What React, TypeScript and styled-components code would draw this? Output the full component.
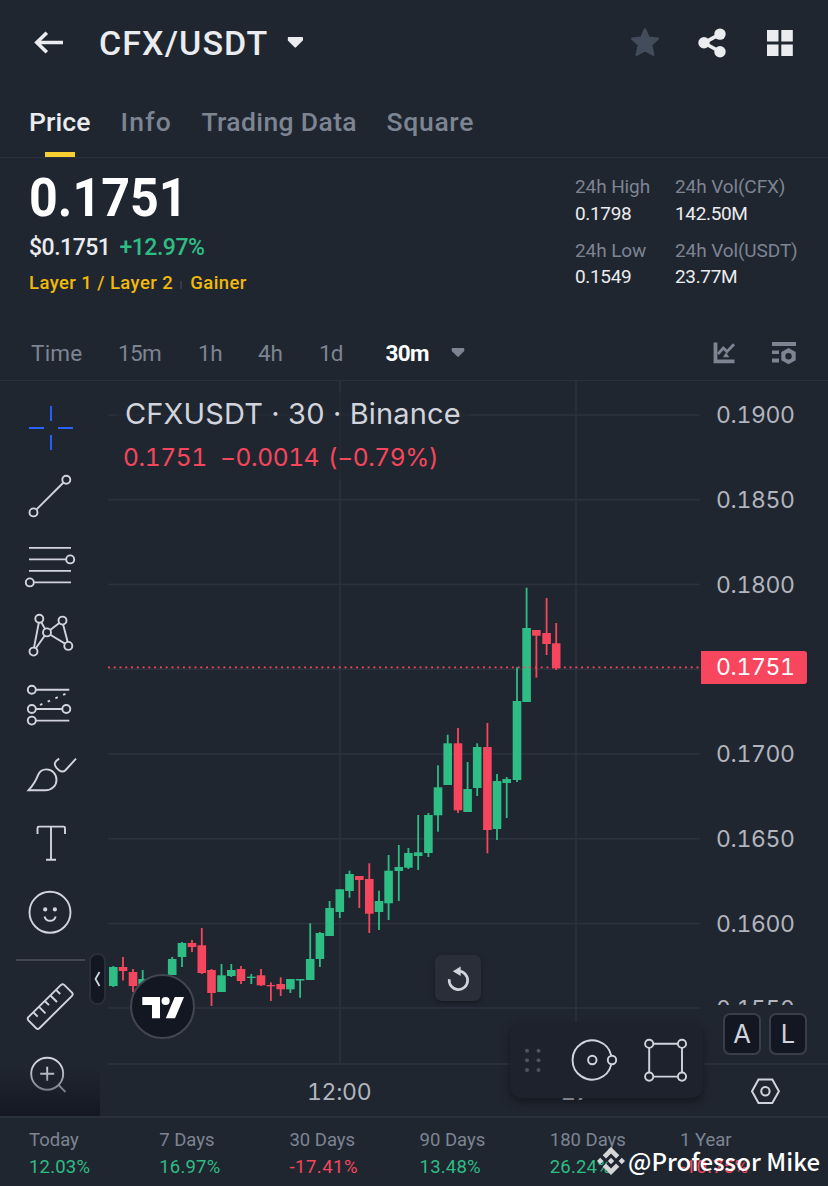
import React from "react";
import styled, { createGlobalStyle } from "styled-components";

const c = {
  bg: "#202630",
  line: "#2b313b",
  text: "#eaecef",
  muted: "#7d8492",
  green: "#2ebd85",
  red: "#f6465d",
  yellow: "#f0b90b",
  ink: "#d1d4dc",
  dark: "#131722",
};

const GlobalStyle = createGlobalStyle`
  * { box-sizing: border-box; }
  body { margin: 0; background: ${c.bg}; }
`;

const Page = styled.div`
  position: relative;
  width: 828px;
  height: 1186px;
  overflow: hidden;
  display: flex;
  flex-direction: column;
  background: ${c.bg};
  color: ${c.text};
  font-family: Roboto, sans-serif;
  white-space: nowrap;
`;

/* ---------- header ---------- */

const Header = styled.header`
  height: 86px;
  display: flex;
  align-items: center;
  padding: 0 34px 1px 33px;
`;

const Title = styled.h1`
  margin: 1px 19px 0 35px;
  font-size: 34px;
  font-weight: 500;
  line-height: 40px;
  letter-spacing: 1.1px;
`;

const HeaderActions = styled.div`
  margin-left: auto;
  display: flex;
  align-items: center;
`;

const StarIcon = styled.svg`
  margin-right: 38px;
`;

const ShareIcon = styled.svg`
  margin-right: 39px;
`;

const Tabs = styled.nav`
  height: 72px;
  padding: 1px 0 0 29px;
  display: grid;
  grid-template-columns: 91.5px 81px 185px auto;
  border-bottom: 1px solid ${c.line};
`;

const Tab = styled.span<{ $active?: boolean; $track?: number }>`
  position: relative;
  justify-self: start;
  font-size: 26.5px;
  font-weight: 500;
  line-height: 70px;
  letter-spacing: ${(p) => p.$track ?? 0}px;
  color: ${(p) => (p.$active ? c.text : c.muted)};
  &::after {
    content: "";
    display: ${(p) => (p.$active ? "block" : "none")};
    position: absolute;
    left: 16px;
    bottom: 0;
    width: 30px;
    height: 5px;
    background: #f8cf33;
  }
`;

/* ---------- ticker ---------- */

const Ticker = styled.section`
  height: 167px;
  padding: 12px 0 0 29px;
  display: grid;
  grid-template-columns: 546px auto;
`;

const BigPrice = styled.div`
  font-size: 54px;
  font-weight: 700;
  line-height: 56px;
  color: #fff;
  transform: scaleX(0.93);
  transform-origin: left;
`;

const SubPrice = styled.div`
  margin-top: 8px;
  display: flex;
  gap: 9px;
  font-size: 23px;
  font-weight: 500;
  line-height: 28px;
  letter-spacing: -0.48px;
`;

const Change = styled.span`
  color: ${c.green};
`;

const Tags = styled.div`
  margin-top: 9px;
  display: flex;
  align-items: center;
  font-size: 18.5px;
  font-weight: 500;
  line-height: 24px;
  letter-spacing: 0.42px;
  color: ${c.yellow};
`;

const TagDivider = styled.i`
  width: 2px;
  height: 8px;
  margin: 3px 8px 0 7px;
  background: #333b47;
`;

const Stats = styled.dl`
  margin: 5px 0 0;
  display: grid;
  grid-template-columns: 100px auto;
  align-content: start;
  row-gap: 13px;
`;

const Stat = styled.div`
  dt, dd {
    margin: 0;
    font-size: 19px;
    line-height: 24px;
  }
  dt { color: ${c.muted}; letter-spacing: -0.1px; }
  dd { margin-top: 2.5px; letter-spacing: -0.35px; }
`;

/* ---------- intervals ---------- */

const Intervals = styled.nav`
  height: 56px;
  padding-left: 31px;
  display: grid;
  grid-template-columns: 87px 80px 60px 61px 66.5px 65px 262px 59px auto;
  align-items: center;
  border-bottom: 1px solid ${c.line};
`;

const Interval = styled.span<{ $active?: boolean; $track?: number }>`
  font-size: 22.5px;
  line-height: 28px;
  letter-spacing: ${(p) => p.$track ?? 0}px;
  font-weight: ${(p) => (p.$active ? 700 : 400)};
  color: ${(p) => (p.$active ? "#fff" : c.muted)};
`;

/* ---------- chart ---------- */

const Main = styled.main`
  height: 735px;
  display: flex;
`;

const Toolbar = styled.aside`
  position: relative;
  width: 100px;
  padding-top: 12px;
  display: flex;
  flex-direction: column;
`;

const Tool = styled.button`
  height: 69.3px;
  padding: 0;
  border: 0;
  background: none;
  display: block;
`;

const ToolDivider = styled.hr`
  width: 69px;
  height: 2px;
  margin: 12px 0 11px 16px;
  border: 0;
  background: #434651;
`;

const Fade = styled.div`
  position: absolute;
  left: 0;
  right: 0;
  bottom: 0;
  height: 50px;
  background: linear-gradient(to bottom, rgba(19, 23, 34, 0), rgba(19, 23, 34, 0.95));
`;

const Collapse = styled.button`
  position: absolute;
  left: 89px;
  bottom: 111px;
  width: 17px;
  height: 52px;
  padding: 0;
  border: 2px solid #2a2e39;
  border-radius: 8px;
  background: ${c.dark};
  display: grid;
  place-items: center;
  z-index: 1;
`;

const ChartColumn = styled.div`
  position: relative;
  width: 728px;
  display: flex;
  flex-direction: column;
`;

const PlotRow = styled.div`
  height: 682px;
  display: flex;
`;

const Axis = styled.div`
  width: 127px;
  display: flex;
  flex-direction: column;
`;

const AxisScale = styled.div`
  height: 624px;
  overflow: hidden;
  font-family: Inter, sans-serif;
  font-size: 23px;
  font-variant-numeric: tabular-nums;
  letter-spacing: -0.35px;
  color: #b2b5be;
`;

const AxisLabel = styled.div`
  height: 84.8px;
  padding-left: 15px;
  line-height: 84.8px;
  &:first-child { margin-top: -8px; }
`;

const AxisCurrent = styled.div`
  height: 84.8px;
  padding-bottom: 4px;
  display: flex;
  align-items: center;
`;

const PriceTag = styled.span`
  width: 106px;
  padding-left: 15px;
  line-height: 33px;
  border-radius: 0 3px 3px 0;
  background: #f7465d;
  color: #fff;
`;

const ScaleButtons = styled.div`
  margin: 8px 0 0 22px;
  display: flex;
  gap: 8px;
`;

const ScaleButton = styled.button`
  width: 38px;
  height: 42px;
  padding: 0;
  border: 2px solid #3a3e4a;
  border-radius: 7px;
  background: ${c.dark};
  color: ${c.ink};
  font: 400 25.5px/38px Inter, sans-serif;
`;

const TimeAxis = styled.div`
  height: 53px;
  margin-left: 8px;
  border-top: 2px solid ${c.line};
  display: grid;
  grid-template-columns: 462px 142px auto;
  align-items: center;
  font-family: Inter, sans-serif;
  font-size: 23px;
  font-variant-numeric: tabular-nums;
  letter-spacing: -0.3px;
  color: #b2b5be;
`;

const TimeLabels = styled.div`
  display: flex;
  justify-content: space-between;
  padding-left: 199px;
  padding-top: 2px;
  width: 482px;
`;

const BoldLabel = styled.b`
  font-weight: 600;
`;

const Legend = styled.div`
  position: absolute;
  left: 16px;
  top: 12px;
  padding: 0 8px;
  background: rgba(32, 38, 48, 0.65);
  font-family: Inter, sans-serif;
`;

const LegendTitle = styled.div`
  padding-left: 1px;
  font-size: 29px;
  line-height: 42px;
  letter-spacing: 0.14px;
  color: ${c.ink};
`;

const LegendValues = styled.div`
  display: grid;
  grid-template-columns: 97px 108px auto;
  margin-left: -1px;
  font-size: 24.5px;
  line-height: 44px;
  letter-spacing: -0.4px;
  font-variant-numeric: tabular-nums;
  color: ${c.red};
`;

const BrandBadge = styled.div`
  position: absolute;
  left: 30px;
  top: 593px;
  width: 65px;
  height: 65px;
  border: 2px solid #434651;
  border-radius: 50%;
  background: ${c.dark};
`;

const ResetButton = styled.button`
  position: absolute;
  left: 335px;
  top: 574px;
  width: 46px;
  height: 46px;
  padding: 0;
  border: 0;
  border-radius: 7px;
  background: #2a2e39;
  box-shadow: 0 2px 5px rgba(0, 0, 0, 0.35);
`;

const DrawingBar = styled.div`
  position: absolute;
  left: 410px;
  top: 641px;
  width: 193px;
  height: 76px;
  border-radius: 12px;
  background: #1e222d;
  box-shadow: 0 4px 10px rgba(0, 0, 0, 0.4);
`;

/* ---------- performance ---------- */

const Performance = styled.footer`
  height: 70px;
  padding: 9px 0 0 29px;
  display: grid;
  grid-template-columns: repeat(6, 130.2px);
  border-top: 2px solid ${c.line};
`;

const Period = styled.div<{ $down?: boolean }>`
  font-size: 18.5px;
  line-height: 27px;
  color: ${c.muted};
  strong {
    display: block;
    font-weight: 400;
    letter-spacing: ${(p) => (p.$down ? 0.5 : 0.2)}px;
    color: ${(p) => (p.$down ? c.red : c.green)};
  }
`;

const Watermark = styled.div`
  position: absolute;
  left: 597px;
  top: 1145px;
  display: flex;
  align-items: center;
  gap: 3px;
  font: 500 24px/32px "Noto Sans CJK SC", "Noto Sans", sans-serif;
  letter-spacing: 0.05px;
  color: #fff;
`;

type Candle = [x: number, open: number, close: number, high: number, low: number, up: 0 | 1];

/* x centre, body top, body bottom, wick top, wick bottom, rising */
const candles: Candle[] = [
  [113.3, 967, 986, 966, 987, 1], [123, 967, 971, 957, 980.5, 0], [133, 972, 986, 969, 992, 0],
  [142.7, 979, 986, 970, 990, 1], [152.5, 979, 988, 976, 990, 0], [162.3, 976, 988, 974, 990, 1],
  [172.2, 959, 975, 957, 975, 1], [182, 943, 957, 942, 967, 1], [192, 943, 947, 940, 952, 0],
  [201.8, 945.3, 973, 928, 974, 0], [211.5, 970, 993, 969, 1006, 0], [221.5, 975.3, 992, 964, 992, 1],
  [231.3, 970, 976, 964, 977, 1], [241, 969, 981, 966, 984, 0], [251.3, 976.7, 978, 974, 984, 1],
  [261, 975.3, 985.3, 969, 986, 0], [270.9, 985, 986.3, 982.3, 1001, 0], [280.7, 984, 989.3, 977.3, 996, 0],
  [290.4, 979, 989.3, 979, 993, 1], [300.1, 979, 980.5, 979, 997.7, 1], [310.2, 959, 980, 923.3, 980, 1],
  [319.9, 933, 959, 932, 967, 1], [329.6, 908, 936, 901, 936, 1], [339.8, 889.3, 912, 889.3, 918, 1],
  [349.5, 874, 891, 870.7, 897.7, 1], [359.3, 876, 880, 876, 908, 0], [369.3, 879, 913.7, 863.3, 933, 0],
  [379, 901, 912, 890.7, 930, 1], [388.6, 870.7, 903.3, 855, 920, 1], [398.8, 867, 871, 845, 901, 1],
  [408.4, 853, 867.7, 848, 869, 1], [418.2, 852.3, 856, 815, 870, 1], [428.4, 815, 853, 813, 857, 1],
  [438, 787.3, 815.3, 765.3, 831.7, 1], [447.7, 743.3, 785, 734.7, 785, 1], [458, 743.3, 810.3, 728, 813, 0],
  [467.6, 789, 812, 762, 812, 1], [477.2, 747, 788, 743.3, 796, 1], [487.4, 747, 830, 723, 853.3, 0],
  [497, 781, 829, 774, 840, 1], [506.7, 779, 783, 777, 818, 1], [517, 701, 780, 667.3, 782, 1],
  [526.6, 628, 702, 587.7, 702, 1], [536.4, 630, 635.7, 630, 677.7, 0], [546.6, 633, 644, 598, 655, 0],
  [556.2, 643.3, 668.3, 623, 670, 0],
];

const gridRows = [415, 499.7, 584.4, 669.2, 754, 838.8, 923.6, 1008];

const Plot = () => (
  <svg width="601" height="682" viewBox="100 381 601 682">
    <g fill="#2c323d">
      {gridRows.map((y) => (
        <rect key={y} x="108" y={y - 0.8} width="592" height="1.6" />
      ))}
      <rect x="339.2" y="381" width="1.6" height="682" />
      <rect x="575.2" y="381" width="1.6" height="682" />
    </g>
    {candles.map(([x, top, bottom, high, low, up]) => (
      <g key={x} fill={up ? c.green : c.red}>
        <rect x={x - 0.9} y={high} width="1.8" height={low - high} />
        <rect x={x - 4.3} y={top} width="8.6" height={bottom - top} />
      </g>
    ))}
    <path d="M108 667.4H700" stroke={c.red} strokeWidth="1.9" strokeDasharray="1.9 3.87" />
  </svg>
);

const tools: React.ReactNode[] = [
  <g stroke="#2962ff"><path d="M51 13V28M51 42V57M29 35H44M58 35H73" /></g>,
  <><circle cx="66.3" cy="17.7" r="4" /><circle cx="33.5" cy="50.4" r="4" /><path d="M63.5 20.5L36.3 47.6" /></>,
  <><path d="M29 15.9H71M29 27.4H66M29 38.9H71M34 50.4H71" /><circle cx="70.2" cy="27.4" r="4" /><circle cx="29.8" cy="50.4" r="4" /></>,
  <>
    <circle cx="39.3" cy="17.8" r="4" /><circle cx="62.5" cy="19.6" r="4" /><circle cx="47" cy="31.4" r="4" />
    <circle cx="33.5" cy="50.6" r="4" /><circle cx="68.3" cy="44.9" r="4" />
    <path d="M38.8 21.8L34 46.6M41.3 21.3L45 27.9M44.7 34.7L35.8 47.3M50.2 29L59.3 22M50.3 33.7L65 42.6M63.1 23.6L67.7 40.9" />
  </>,
  <>
    <circle cx="31.8" cy="19.8" r="4" /><circle cx="31.8" cy="39" r="4" /><circle cx="66.3" cy="39" r="4" /><circle cx="31.8" cy="50.6" r="4" />
    <path d="M35.8 19.8H69.3M35.8 39H62.3M35.8 50.6H69.3" />
    <path d="M40 35L67 23.2" strokeDasharray="2.6 5.8" />
  </>,
  <>
    <path d="M28.6 51.2H45.5C52 51.2 56.5 46.4 56.5 40.9C56.5 34.9 52 30.4 46.5 30.4C42 30.4 39.5 32.6 38 36.2C36 41.7 33 46.4 28.6 51.2Z" />
    <path d="M59.2 19.6C54.3 22.4 53.5 25.4 56.5 28.9L59 31.2C61.5 33.2 63.5 33.2 65.7 31L76 19.6" />
  </>,
  <path d="M37.5 25V19Q37.5 17.6 39 17.6H63.5Q65 17.6 65 19V25M51 17.6V50.8M46 50.8H56" />,
  <>
    <circle cx="50" cy="34.3" r="20.5" />
    <path d="M44.5 38.4C46 44.2 54 44.2 55.7 38.4" />
    <g stroke="none" fill={c.ink}><circle cx="45.2" cy="31.4" r="2.1" /><circle cx="54.9" cy="31.4" r="2.1" /></g>
  </>,
];

/* the last two tools sit below the divider */
const lowerTools: React.ReactNode[] = [
  <>
    <path d="M61 12.9Q62.6 11.5 64.2 12.9L72 20.7Q73.4 22.3 72 23.9L39.4 56.2Q37.8 57.6 36.2 56.2L28.4 48.4Q27 46.8 28.4 45.2Z" />
    <path d="M33.5 40.5L37.7 44.7M39 34.8L45.5 41.3M44.8 29L49 33.2M50.4 23.5L57 30M56 17.8L60.2 22" />
  </>,
  <><circle cx="47.2" cy="31.7" r="16" /><path d="M47.2 24.7V38.7M40.2 31.7H54.2M58.7 43.2L65.5 50" /></>,
];

const ToolIcon = ({ children }: { children: React.ReactNode }) => (
  <svg width="100" height="69.3" viewBox="0 0 100 69.3" fill="none" stroke={c.ink} strokeWidth="1.9">
    {children}
  </svg>
);

const tabs = [
  { label: "Price", active: true, track: 0.1 },
  { label: "Info", track: 1.2 },
  { label: "Trading Data", track: 0.36 },
  { label: "Square", track: 0.7 },
];

const intervals = [
  { label: "Time", track: 0.2 },
  { label: "15m", track: -0.6 },
  { label: "1h", track: -0.5 },
  { label: "4h", track: -0.1 },
  { label: "1d", track: -0.9 },
  { label: "30m", track: -0.7, active: true },
];

const stats = [
  ["24h High", "0.1798"],
  ["24h Vol(CFX)", "142.50M"],
  ["24h Low", "0.1549"],
  ["24h Vol(USDT)", "23.77M"],
];

const periods = [
  ["Today", "12.03%"],
  ["7 Days", "16.97%"],
  ["30 Days", "-17.41%"],
  ["90 Days", "13.48%"],
  ["180 Days", "26.24%"],
  ["1 Year", "-10.75%"],
];

export default function App() {
  return (
    <Page>
      <GlobalStyle />
      <Header>
        <svg width="31" height="24" viewBox="0 0 31 24" fill="none" stroke={c.text} strokeWidth="3.6">
          <path d="M3.5 11.5H30M13.8 1.7L3.8 11.5L13.8 21.3" />
        </svg>
        <Title>CFX/USDT</Title>
        <svg width="17" height="14" viewBox="0 0 17 14" fill={c.text}>
          <path d="M1.5 1H15Q16 1 16 2V4.3L9 11.3Q8.3 12 7.6 11.3L.8 4.5V2Q.8 1 1.5 1Z" />
        </svg>
        <HeaderActions>
          <StarIcon width="30" height="31" viewBox="0 0 30 31" fill="#434c5a" stroke="#434c5a" strokeWidth="2.4" strokeLinejoin="round">
            <path d="M15 2.4L18.7 10.8L27.9 11.7L21 17.8L23.3 27.8L15 23.3L6.7 27.8L9 17.8L2.1 11.7L11.3 10.8Z" />
          </StarIcon>
          <ShareIcon width="29" height="30" viewBox="0 0 29 30" fill={c.text}>
            <circle cx="6" cy="14.8" r="5.7" /><circle cx="22" cy="6.1" r="5.7" /><circle cx="22" cy="23.8" r="5.7" />
            <path d="M22 6.1L6 14.8L22 23.8" fill="none" stroke={c.text} strokeWidth="3.6" />
          </ShareIcon>
          <svg width="28" height="28" viewBox="0 0 28 28" fill={c.text}>
            <path d="M1 1H12.5V12.5H1ZM15.3 1H26.8V12.5H15.3ZM1 15.4H12.5V27H1ZM15.3 15.4H26.8V27H15.3Z" />
          </svg>
        </HeaderActions>
      </Header>

      <Tabs>
        {tabs.map((t) => (
          <Tab key={t.label} $active={t.active} $track={t.track}>{t.label}</Tab>
        ))}
      </Tabs>

      <Ticker>
        <div>
          <BigPrice>0.1751</BigPrice>
          <SubPrice>
            <span>$0.1751</span>
            <Change>+12.97%</Change>
          </SubPrice>
          <Tags>
            <span>Layer 1 / Layer 2</span>
            <TagDivider />
            <span>Gainer</span>
          </Tags>
        </div>
        <Stats>
          {stats.map(([label, value]) => (
            <Stat key={label}>
              <dt>{label}</dt>
              <dd>{value}</dd>
            </Stat>
          ))}
        </Stats>
      </Ticker>

      <Intervals>
        {intervals.map((t) => (
          <Interval key={t.label} $active={t.active} $track={t.track}>{t.label}</Interval>
        ))}
        <svg width="14" height="12" viewBox="0 0 14 12" fill="#7d8492">
          <path d="M1.5 1H12.5Q13.3 1 13.3 1.8V4L7.7 9.6Q7 10.3 6.3 9.6L.7 4V1.8Q.7 1 1.5 1Z" />
        </svg>
        <svg width="23" height="24" viewBox="0 0 23 24" fill="none" stroke="#7d8492">
          <path d="M2.5 1.5V20.3H21.5" strokeWidth="3.8" />
          <path d="M5 13L10.3 7L14 10.6L21 3.2" strokeWidth="2.8" />
          <path d="M13 11.3L10 16.2H16.3Z" fill="#7d8492" stroke="none" />
        </svg>
        <svg width="25" height="24" viewBox="0 0 25 24" fill="#7d8492">
          <path d="M0 1H24V5H0ZM0 9.5H7V13H0ZM0 17.5H7V21.5H0Z" />
          <path fillRule="evenodd" d="M16.5 7L23.7 11V19.3L16.5 23.3L9.3 19.3V11ZM16.5 12A3.2 3.2 0 1 0 16.5 18.4A3.2 3.2 0 1 0 16.5 12Z" />
        </svg>
      </Intervals>

      <Main>
        <Toolbar>
          {tools.map((icon, i) => (
            <Tool key={i}><ToolIcon>{icon}</ToolIcon></Tool>
          ))}
          <ToolDivider />
          {lowerTools.map((icon, i) => (
            <Tool key={i}><ToolIcon>{icon}</ToolIcon></Tool>
          ))}
          <Fade />
          <Collapse>
            <svg width="7" height="16" viewBox="0 0 7 16" fill="none" stroke={c.ink} strokeWidth="1.8">
              <path d="M5.5 1L1.5 8L5.5 15" />
            </svg>
          </Collapse>
        </Toolbar>

        <ChartColumn>
          <PlotRow>
            <Plot />
            <Axis>
              <AxisScale>
                <AxisLabel>0.1900</AxisLabel>
                <AxisLabel>0.1850</AxisLabel>
                <AxisLabel>0.1800</AxisLabel>
                <AxisCurrent><PriceTag>0.1751</PriceTag></AxisCurrent>
                <AxisLabel>0.1700</AxisLabel>
                <AxisLabel>0.1650</AxisLabel>
                <AxisLabel>0.1600</AxisLabel>
                <AxisLabel>0.1550</AxisLabel>
              </AxisScale>
              <ScaleButtons>
                <ScaleButton>A</ScaleButton>
                <ScaleButton>L</ScaleButton>
              </ScaleButtons>
            </Axis>
          </PlotRow>
          <TimeAxis>
            <TimeLabels>
              <span>12:00</span>
              <BoldLabel>17</BoldLabel>
            </TimeLabels>
            <span />
            <svg width="110" height="50" viewBox="712 1066 110 50" fill="none" stroke={c.ink} strokeWidth="2">
              <path d="M758.5 1079.4H772.3L778.9 1091.2L772.3 1103H758.5L752 1091.2Z" />
              <circle cx="765.4" cy="1091.2" r="4.2" />
            </svg>
          </TimeAxis>

          <Legend>
            <LegendTitle>CFXUSDT · 30 · Binance</LegendTitle>
            <LegendValues>
              <span>0.1751</span>
              <span>−0.0014</span>
              <span>(−0.79%)</span>
            </LegendValues>
          </Legend>

          <BrandBadge>
            <svg width="61" height="61" viewBox="132 976 61 61" fill="#fff">
              <path d="M142.3 997H160V1018.3H152V1005H142.3ZM174.8 997H184L175 1018.3H165.8Z" />
              <circle cx="165.6" cy="1001" r="4.1" />
            </svg>
          </BrandBadge>

          <ResetButton>
            <svg width="46" height="46" viewBox="0 0 46 46" fill="none">
              <path d="M14.3 24.2A9.2 9.2 0 1 0 23.4 16.2" stroke={c.ink} strokeWidth="2.7" />
              <path d="M25.7 11.5V21L17.8 16.3Z" fill={c.ink} />
            </svg>
          </ResetButton>

          <DrawingBar>
            <svg width="193" height="76" viewBox="510 1022 193 76" fill="none" stroke={c.ink} strokeWidth="1.9">
              <g fill="#50535e" stroke="none">
                {[1050.7, 1060.2, 1070].map((y) => (
                  <g key={y}><circle cx="527" cy={y} r="2" /><circle cx="538.5" cy={y} r="2" /></g>
                ))}
              </g>
              <path d="M611.2 1055.4A19.6 19.6 0 1 0 611.2 1064.6" />
              <circle cx="592.3" cy="1060" r="4.2" /><circle cx="612" cy="1060" r="4.2" />
              <circle cx="649.2" cy="1043.8" r="4.1" /><circle cx="682" cy="1043.8" r="4.1" />
              <circle cx="649.2" cy="1076.6" r="4.1" /><circle cx="682" cy="1076.6" r="4.1" />
              <path d="M653.3 1043.8H677.9M653.3 1076.6H677.9M649.2 1047.9V1072.5M682 1047.9V1072.5" />
            </svg>
          </DrawingBar>
        </ChartColumn>
      </Main>

      <Performance>
        {periods.map(([label, value]) => (
          <Period key={label} $down={value.startsWith("-")}>
            {label}
            <strong>{value}</strong>
          </Period>
        ))}
      </Performance>

      <Watermark>
        <svg width="28" height="28" viewBox="0 0 28 28" fill="#d5d6d8">
          <path d="M14 0L22.3 8.3L19 11.6L14 6.6L9 11.6L5.7 8.3ZM14 28L22.3 19.7L19 16.4L14 21.4L9 16.4L5.7 19.7Z" />
          <path d="M14 10.8L17.2 14L14 17.2L10.8 14ZM3.2 10.8L6.4 14L3.2 17.2L0 14ZM24.8 10.8L28 14L24.8 17.2L21.6 14Z" />
        </svg>
        <span>@Professor Mike</span>
      </Watermark>
    </Page>
  );
}
